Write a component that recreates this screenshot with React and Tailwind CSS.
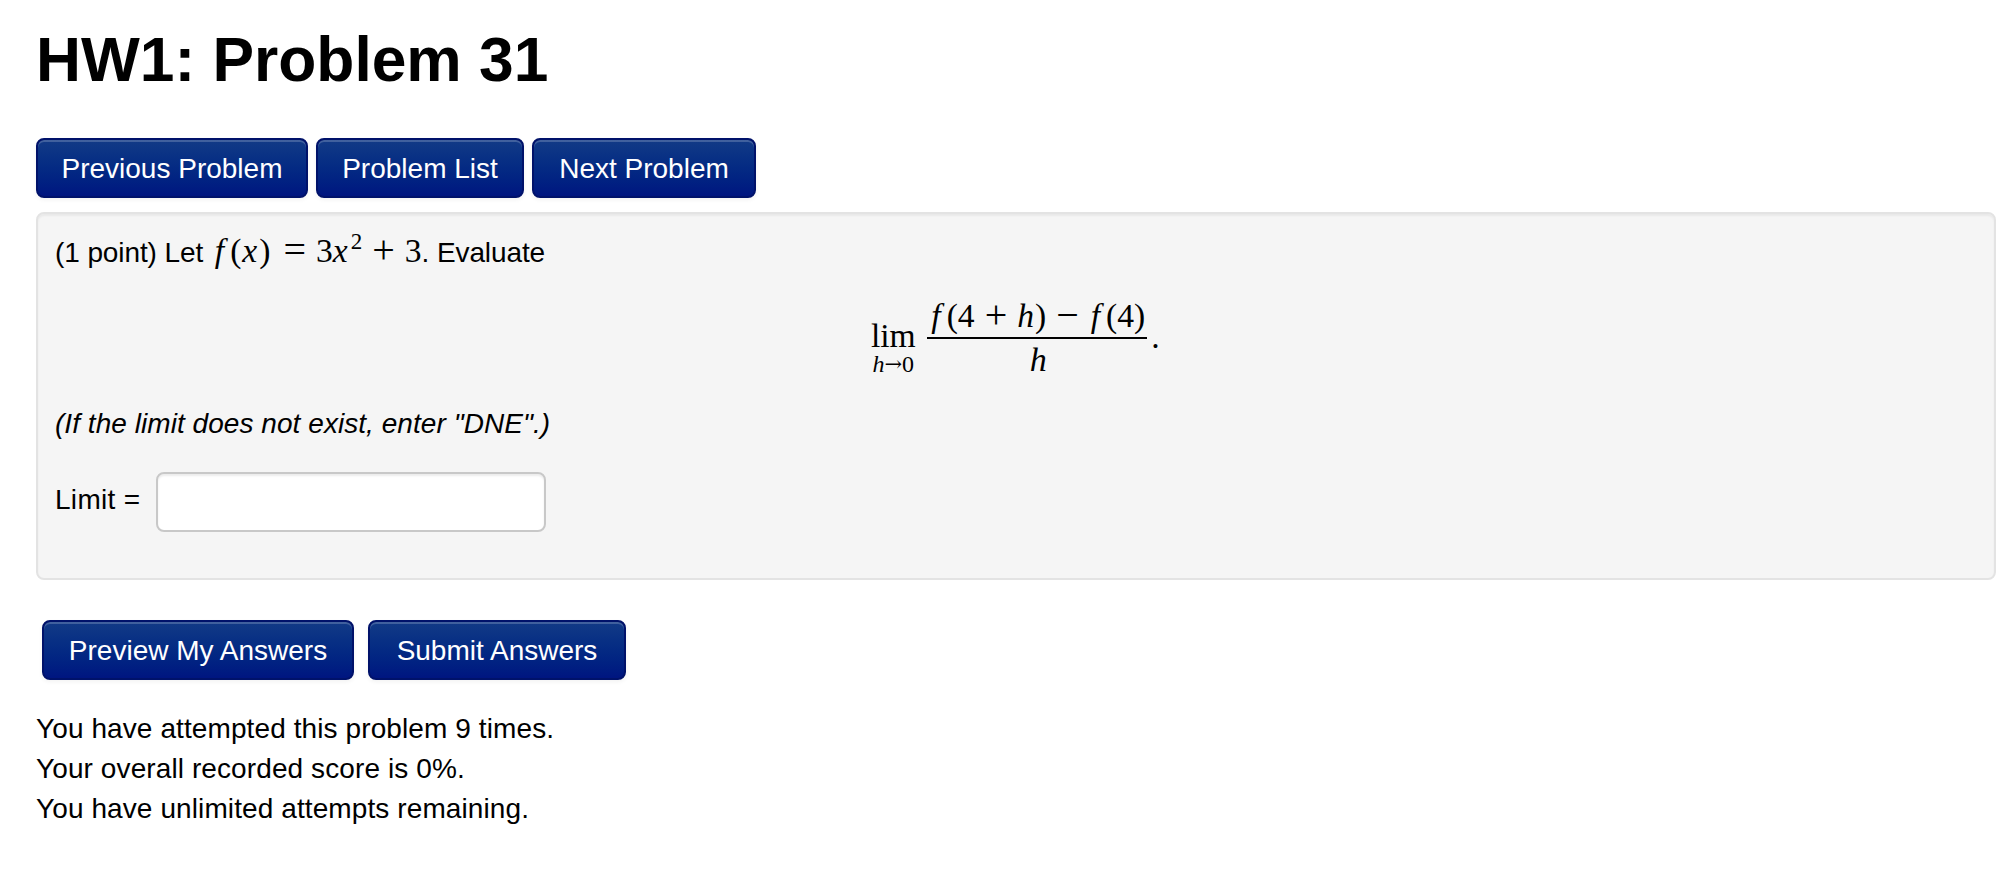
const sans = "font-['Liberation_Sans',Arial,sans-serif]";

function NavButton({ children, className = "" }) {
  return (
    <button
      type="button"
      className={`h-[60px] rounded-lg border-2 border-[#00126a] bg-gradient-to-b from-[#123a86] to-[#001580] pt-[2px] text-[28px] leading-[40px] whitespace-nowrap text-white shadow-[inset_0_2px_0_rgba(255,255,255,0.2),0_2px_4px_rgba(0,0,0,0.05)] ${className}`}
    >
      {children}
    </button>
  );
}

const I = ({ children, className = "" }) => <i className={`italic ${className}`}>{children}</i>;
const F = () => <i className="mr-[6px] ml-[2px] italic">f</i>;
const Op = ({ children }) => <span className="mx-[10px] align-[-1px] text-[40px] leading-none">{children}</span>;

export default function App() {
  return (
    <div className={`min-h-[872px] bg-white pl-[36px] text-[28px] leading-[40px] text-black ${sans}`}>
      <h1 className="pt-[25px] text-[62.3px] leading-[70px] font-bold">HW1: Problem 31</h1>
      <div className="mt-[43px] flex gap-[8px]">
        <NavButton className="w-[272px]">Previous Problem</NavButton>
        <NavButton className="w-[208px]">Problem List</NavButton>
        <NavButton className="w-[224px]">Next Problem</NavButton>
      </div>
      <div className="mt-[14px] h-[368px] rounded-lg border-2 border-[#e3e3e3] bg-[#f5f5f5] px-[17px] pt-[16px] shadow-[inset_0_2px_2px_rgba(0,0,0,0.05)]">
        <p className="h-[40px] tracking-[-0.1px]">
          (1 point) Let{" "}
          <span className="ml-[2px] font-['Liberation_Serif',serif] text-[33.6px] leading-none tracking-normal">
            <F />(<I className="mr-[2px] ml-[1px]">x</I>)<span className="ml-[3px]" /><Op>=</Op>3<I className="mr-[3px]">x</I>
            <sup className="-top-[13px] text-[23px] leading-none">2</sup><Op>+</Op>3
          </span>
          . Evaluate
        </p>
        <div className="mt-[9px] flex h-[100px] items-start justify-center pr-[2px] font-['Liberation_Serif',serif] text-[33.6px] leading-[36px]">
          <div className="mt-[40px] mr-[11px] flex w-[46px] flex-col items-center">
            <span className="leading-[34px]">lim</span>
            <span className="flex items-center text-[24px] leading-[22px] whitespace-nowrap"><I>h</I><span className="font-['DejaVu_Serif',serif] text-[21px]">→</span>0</span>
          </div>
          <div className="mt-[16px] flex w-[220px] flex-col items-center">
            <span className="h-[42px] leading-[38px] whitespace-nowrap"><F />(4<Op>+</Op><I className="mr-[1px]">h</I>)<Op>−</Op><F />(4)</span>
            <span className="h-[2px] w-full bg-black" />
            <span className="mt-[3px] pl-[2px] text-[34px] leading-[36px]"><I>h</I></span>
          </div>
          <span className="mt-[40px] ml-[4px]">.</span>
        </div>
        <p className="mt-[25px] tracking-[0.05px] italic">(If the limit does not exist, enter "DNE".)</p>
        <div className="mt-[28px] flex items-center gap-[16px]">
          <span className="-mt-[4px] tracking-[0.3px]">Limit =</span>
          <input
            type="text"
            aria-label="Limit"
            className="h-[60px] w-[390px] rounded-lg border-2 border-[#c8c8c8] bg-white shadow-[inset_0_2px_2px_rgba(0,0,0,0.075)]"
          />
        </div>
      </div>
      <div className="mt-[40px] ml-[6px] flex gap-[14px]">
        <NavButton className="w-[312px]">Preview My Answers</NavButton>
        <NavButton className="w-[258px]">Submit Answers</NavButton>
      </div>
      <div className="mt-[29px] tracking-[0.1px]">
        <p>You have attempted this problem 9 times.</p>
        <p>Your overall recorded score is 0%.</p>
        <p>You have unlimited attempts remaining.</p>
      </div>
    </div>
  );
}
